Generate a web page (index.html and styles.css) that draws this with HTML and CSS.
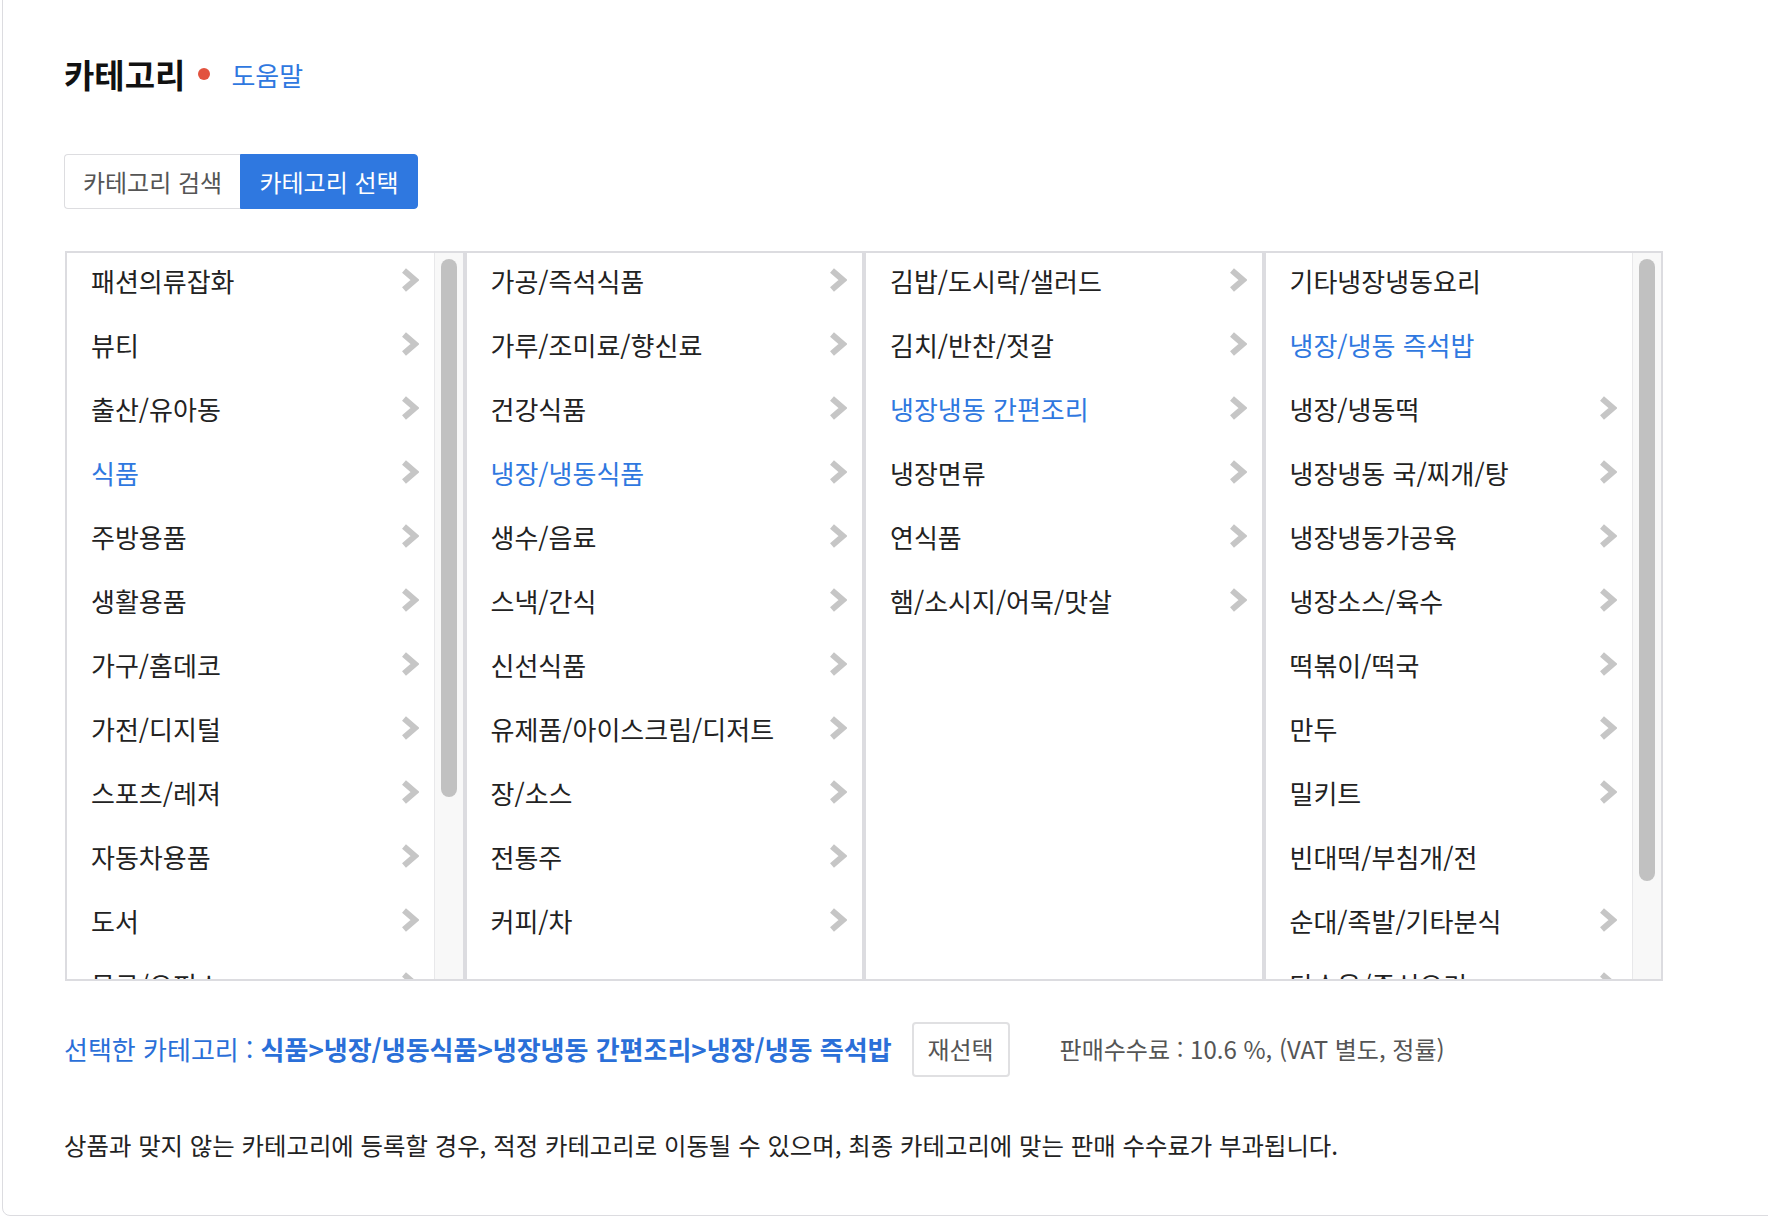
FILE: index.html
```html
<!DOCTYPE html>
<html lang="ko">
<head>
	<meta charset="UTF-8">
	<title>카테고리</title>
	<link rel="stylesheet" href="styles.css">
</head>
<body>
	<div class="card">
		<div class="head">
			<h2 class="head-title">카테고리</h2>
			<span class="head-dot"></span>
			<a class="head-help" href="#">도움말</a>
		</div>

		<div class="tabs">
			<button class="tab">카테고리 검색</button>
			<button class="tab active">카테고리 선택</button>
		</div>

		<div class="picker">
			<div class="col">
				<ul class="list">
					<li><span>패션의류잡화</span><i class="arr"></i></li>
					<li><span>뷰티</span><i class="arr"></i></li>
					<li><span>출산/유아동</span><i class="arr"></i></li>
					<li class="on"><span>식품</span><i class="arr"></i></li>
					<li><span>주방용품</span><i class="arr"></i></li>
					<li><span>생활용품</span><i class="arr"></i></li>
					<li><span>가구/홈데코</span><i class="arr"></i></li>
					<li><span>가전/디지털</span><i class="arr"></i></li>
					<li><span>스포츠/레져</span><i class="arr"></i></li>
					<li><span>자동차용품</span><i class="arr"></i></li>
					<li><span>도서</span><i class="arr"></i></li>
					<li><span>문구/오피스</span><i class="arr"></i></li>
					<li><span>완구/취미</span><i class="arr"></i></li>
					<li><span>반려/애완용품</span><i class="arr"></i></li>
					<li><span>헬스/건강식품</span><i class="arr"></i></li>
				</ul>
				<div class="scroll"><span class="thumb" style="height:538px"></span></div>
			</div>
			<div class="col">
				<ul class="list">
					<li><span>가공/즉석식품</span><i class="arr"></i></li>
					<li><span>가루/조미료/향신료</span><i class="arr"></i></li>
					<li><span>건강식품</span><i class="arr"></i></li>
					<li class="on"><span>냉장/냉동식품</span><i class="arr"></i></li>
					<li><span>생수/음료</span><i class="arr"></i></li>
					<li><span>스낵/간식</span><i class="arr"></i></li>
					<li><span>신선식품</span><i class="arr"></i></li>
					<li><span>유제품/아이스크림/디저트</span><i class="arr"></i></li>
					<li><span>장/소스</span><i class="arr"></i></li>
					<li><span>전통주</span><i class="arr"></i></li>
					<li><span>커피/차</span><i class="arr"></i></li>
				</ul>
			</div>
			<div class="col">
				<ul class="list">
					<li><span>김밥/도시락/샐러드</span><i class="arr"></i></li>
					<li><span>김치/반찬/젓갈</span><i class="arr"></i></li>
					<li class="on"><span>냉장냉동 간편조리</span><i class="arr"></i></li>
					<li><span>냉장면류</span><i class="arr"></i></li>
					<li><span>연식품</span><i class="arr"></i></li>
					<li><span>햄/소시지/어묵/맛살</span><i class="arr"></i></li>
				</ul>
			</div>
			<div class="col">
				<ul class="list">
					<li><span>기타냉장냉동요리</span></li>
					<li class="on"><span>냉장/냉동 즉석밥</span></li>
					<li><span>냉장/냉동떡</span><i class="arr"></i></li>
					<li><span>냉장냉동 국/찌개/탕</span><i class="arr"></i></li>
					<li><span>냉장냉동가공육</span><i class="arr"></i></li>
					<li><span>냉장소스/육수</span><i class="arr"></i></li>
					<li><span>떡볶이/떡국</span><i class="arr"></i></li>
					<li><span>만두</span><i class="arr"></i></li>
					<li><span>밀키트</span><i class="arr"></i></li>
					<li><span>빈대떡/부침개/전</span></li>
					<li><span>순대/족발/기타분식</span><i class="arr"></i></li>
					<li><span>탕수육/중식요리</span><i class="arr"></i></li>
					<li><span>튀김/돈까스</span><i class="arr"></i></li>
				</ul>
				<div class="scroll"><span class="thumb" style="height:622px"></span></div>
			</div>
		</div>

		<div class="picked">
			<p class="picked-path">선택한 카테고리 : <b>식품&gt;냉장/냉동식품&gt;냉장냉동 간편조리&gt;냉장/냉동 즉석밥</b></p>
			<button class="btn-reset">재선택</button>
			<p class="picked-fee">판매수수료 : 10.6 %, (VAT 별도, 정률)</p>
		</div>

		<p class="notice">상품과 맞지 않는 카테고리에 등록할 경우, 적정 카테고리로 이동될 수 있으며, 최종 카테고리에 맞는 판매 수수료가 부과됩니다.</p>
	</div>
</body>
</html>
```

FILE: styles.css
```css
html,body{
	margin:0;
	overflow:hidden;
	background:#fff;
}
body{
	font-family:"Noto Sans CJK KR","Noto Sans",sans-serif;
	color:#222;
}
.card{
	width:1900px;
	margin:-20px 0 0 2px;
	padding:73px 0 54px 61px;
	border:1px solid #dcdce0;
	border-radius:8px;
}

/* 제목 */
.head{
	display:flex;
	align-items:center;
	height:40px;
}
.head-title{
	margin:0;
	font-size:33px;
	font-weight:700;
	color:#111;
	line-height:40px;
}
.head-dot{
	width:12px;
	height:12px;
	margin-left:13px;
	border-radius:50%;
	background:#e2533f;
}
.head-help{
	margin-left:21px;
	font-size:26px;
	color:#2f78e0;
	text-decoration:none;
}

/* 탭 */
.tabs{
	display:flex;
	margin-top:60px;
	height:55px;
}
.tab{
	height:55px;
	padding:0;
	font-family:inherit;
	font-size:24px;
	color:#555;
	background:#fff;
	border:1px solid #dddde0;
	cursor:pointer;
}
.tab:first-child{
	width:176px;
	border-radius:4px 0 0 4px;
	border-right:0;
}
.tab.active{
	width:178px;
	color:#fff;
	background:#2f78e0;
	border-color:#2f78e0;
	border-radius:0 4px 4px 0;
}

/* 카테고리 선택 영역 */
.picker{
	display:flex;
	width:1598px;
	height:730px;
	margin:42px 0 0 1px;
	box-sizing:border-box;
	border:2px solid #dcdce0;
}
.col{
	display:flex;
	flex:1;
	min-width:0;
	overflow:hidden;
}
.col + .col{
	border-left:4px solid #dcdce0;
}
.list{
	flex:1;
	min-width:0;
	margin:0;
	padding:0;
	list-style:none;
}
.list li{
	display:flex;
	align-items:center;
	justify-content:space-between;
	height:64px;
	box-sizing:border-box;
	padding:0 15px 10px 24px;
	font-size:26px;
	color:#222;
	white-space:nowrap;
	cursor:pointer;
}
.list li.on{
	color:#2f78e0;
}
.arr{
	flex:none;
	width:18px;
	height:26px;
	background:url("data:image/svg+xml,%3Csvg xmlns='http://www.w3.org/2000/svg' width='18' height='26' viewBox='0 0 18 26'%3E%3Cpolyline points='3,3.5 14,13 3,22.5' fill='none' stroke='%23c6c6c6' stroke-width='6'/%3E%3C/svg%3E") no-repeat;
}

/* 스크롤바 */
.scroll{
	flex:none;
	width:29px;
	box-sizing:border-box;
	padding:6px 6px 0 6px;
	background:#f8f8f8;
	border-left:1px solid #e8e8ea;
}
.thumb{
	display:block;
	width:16px;
	border-radius:8px;
	background:#c1c1c1;
}

/* 선택 결과 */
.picked{
	display:flex;
	align-items:center;
	height:55px;
	margin-top:41px;
}
.picked-path{
	margin:0 0 3px;
	font-size:26px;
	color:#2a6fd8;
	white-space:nowrap;
}
.picked-path b{
	font-weight:700;
}
.btn-reset{
	width:98px;
	height:55px;
	margin-left:20px;
	padding:0 0 2px;
	font-family:inherit;
	font-size:24px;
	color:#555;
	background:#fff;
	border:2px solid #e0e0e2;
	border-radius:4px;
}
.picked-fee{
	margin:0 0 3px 50px;
	font-size:24px;
	color:#555;
	white-space:nowrap;
}
.notice{
	margin:52px 0 0;
	font-size:24.4px;
	line-height:32px;
	color:#222;
	white-space:nowrap;
}
```
